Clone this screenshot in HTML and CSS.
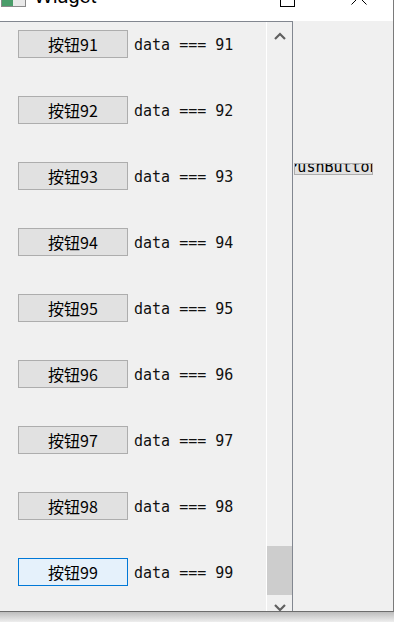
FILE: index.html
```html
<!DOCTYPE html>
<html lang="zh">
<head>
  <meta charset="UTF-8" />
  <meta name="viewport" content="width=device-width, initial-scale=1.0" />
  <title>Widget</title>
  <link rel="stylesheet" href="styles.css">
</head>
<body>
  <div class="window">
    <div class="titlebar">
      <div class="app-icon"><div class="app-icon-fill"></div></div>
      <span class="title">Widget</span>
      <div class="spacer"></div>
      <div class="btn-max"></div>
      <svg class="btn-close" width="16" height="16" viewBox="0 0 16 16">
        <path d="M0.5 0.5 L15.5 15.5 M15.5 0.5 L0.5 15.5" stroke="#000" stroke-width="1" fill="none"/>
      </svg>
    </div>

    <div class="client">
      <div class="scroll-area">
        <div class="viewport">
          <div class="row"><button class="qbtn">按钮91</button><span class="data">data === 91</span></div>
          <div class="row"><button class="qbtn">按钮92</button><span class="data">data === 92</span></div>
          <div class="row"><button class="qbtn">按钮93</button><span class="data">data === 93</span></div>
          <div class="row"><button class="qbtn">按钮94</button><span class="data">data === 94</span></div>
          <div class="row"><button class="qbtn">按钮95</button><span class="data">data === 95</span></div>
          <div class="row"><button class="qbtn">按钮96</button><span class="data">data === 96</span></div>
          <div class="row"><button class="qbtn">按钮97</button><span class="data">data === 97</span></div>
          <div class="row"><button class="qbtn">按钮98</button><span class="data">data === 98</span></div>
          <div class="row"><button class="qbtn focused">按钮99</button><span class="data">data === 99</span></div>
        </div>
        <div class="vscroll">
          <div class="arrow">
            <svg width="12" height="8" viewBox="0 0 12 8"><polyline points="1,7 6,2 11,7" stroke="#606060" stroke-width="2.2" fill="none"/></svg>
          </div>
          <div class="track"><div class="thumb"></div></div>
          <div class="arrow arrow-down">
            <svg width="12" height="8" viewBox="0 0 12 8"><polyline points="1,1 6,6 11,1" stroke="#606060" stroke-width="2.2" fill="none"/></svg>
          </div>
        </div>
      </div>

      <div class="side">
        <div class="push"><span>PushButton</span></div>
      </div>
    </div>
  </div>
  <div class="shadow"></div>
</body>
</html>
```

FILE: styles.css
```css
body {
  margin: 0;
  background: #fff;
  font-family: "Noto Sans CJK SC", sans-serif;
}
.window {
  width: 393px;
  border-right: 1px solid #7a7a7a;
  border-bottom: 1px solid #6d6d6d;
  background: #f0f0f0;
}
.titlebar {
  height: 21px;
  background: #fff;
  display: flex;
  align-items: flex-start;
  overflow: hidden;
}
.app-icon {
  width: 23px;
  height: 15px;
  margin-top: -10px;
  margin-left: 1px;
  border: 1px solid #8a8a8a;
  background: #e9e9e9;
}
.app-icon-fill {
  width: 11px;
  height: 100%;
  background: #4a9d6a;
}
.title {
  margin-left: 8px;
  margin-top: -14px;
  font-family: "Liberation Sans", Arial, sans-serif;
  font-size: 20px;
  line-height: 20px;
  color: #000;
}
.spacer {
  flex: 1;
}
.btn-max {
  width: 13px;
  height: 14px;
  margin-top: -9px;
  border: 1px solid #000;
}
.btn-close {
  margin-left: 56px;
  margin-right: 26px;
  margin-top: -11px;
}

/* client area, the scroll area runs past the bottom edge and is clipped */
.client {
  height: 590px;
  display: flex;
  align-items: flex-start;
  overflow: hidden;
}
.scroll-area {
  width: 292px;
  height: 598px;
  flex-shrink: 0;
  border-top: 1px solid #828790;
  border-right: 1px solid #828790;
  display: flex;
}
.viewport {
  width: 248px;
  padding: 8px 0 0 18px;
  display: flex;
  flex-direction: column;
  gap: 38px;
}
.row {
  display: flex;
  align-items: center;
  gap: 6px;
}
.qbtn {
  width: 110px;
  height: 28px;
  margin: 0;
  padding: 0;
  border: 1px solid #adadad;
  background: #e1e1e1;
  font-family: "Noto Sans CJK SC", sans-serif;
  font-size: 16px;
  color: #000;
  line-height: 26px;
}
.qbtn.focused {
  border-color: #0078d7;
  background: #e5f1fb;
}
.data {
  padding-top: 2px;
  font-family: "DejaVu Sans Mono", monospace;
  font-size: 15px;
  color: #111;
  white-space: pre;
}
.vscroll {
  width: 25px;
  border-left: 1px solid #fff;
  display: flex;
  flex-direction: column;
}
.arrow {
  height: 28px;
  flex-shrink: 0;
  display: flex;
  align-items: center;
  justify-content: center;
}
.arrow-down {
  height: 25px;
}
.track {
  flex: 1;
  display: flex;
  flex-direction: column;
  justify-content: flex-end;
}
.thumb {
  height: 49px;
  background: #cdcdcd;
}
.side {
  flex: 1;
  padding-top: 142px;
}
.push {
  width: 77px;
  height: 10px;
  margin-left: 1px;
  border: 1px solid #adadad;
  background: #e1e1e1;
  display: flex;
  justify-content: center;
  overflow: hidden;
}
.push span {
  font-family: "DejaVu Sans Mono", monospace;
  font-size: 15px;
  line-height: 11px;
  margin-top: -2px;
  color: #000;
  white-space: nowrap;
}
.shadow {
  height: 10px;
  background: linear-gradient(#bdbdbd, #eeeeee);
}
```
